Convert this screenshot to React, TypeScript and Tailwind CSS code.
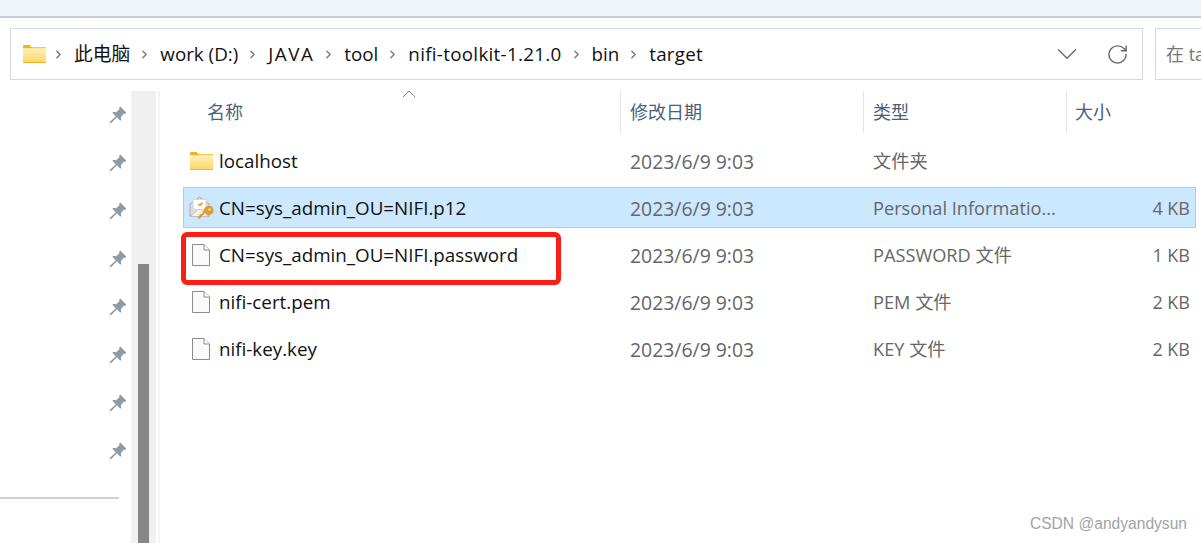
import { ChevronDown, ChevronRight, ChevronUp, RotateCw } from "lucide-react";

const FILES = [
  { name: "localhost", date: "2023/6/9 9:03", type: "文件夹", size: "", icon: "folder" },
  { name: "CN=sys_admin_OU=NIFI.p12", date: "2023/6/9 9:03", type: "Personal Informatio...", size: "4 KB", icon: "cert", selected: true },
  { name: "CN=sys_admin_OU=NIFI.password", date: "2023/6/9 9:03", type: "PASSWORD 文件", size: "1 KB", icon: "file", marked: true },
  { name: "nifi-cert.pem", date: "2023/6/9 9:03", type: "PEM 文件", size: "2 KB", icon: "file" },
  { name: "nifi-key.key", date: "2023/6/9 9:03", type: "KEY 文件", size: "2 KB", icon: "file" },
];

const CRUMBS = [
  { label: "此电脑", className: "" },
  { label: "work (D:)", className: "" },
  { label: "JAVA", className: "tracking-[1.5px]" },
  { label: "tool", className: "" },
  { label: "nifi-toolkit-1.21.0", className: "tracking-[0.3px]" },
  { label: "bin", className: "" },
  { label: "target", className: "tracking-[0.2px]" },
];

function FolderIcon() {
  return (
    <svg width="23" height="18" viewBox="0 0 23 18" className="shrink-0">
      <defs>
        <linearGradient id="folderFill" x1="0" y1="0" x2="0" y2="1">
          <stop offset="0" stopColor="#fff0bd" />
          <stop offset="1" stopColor="#fbd564" />
        </linearGradient>
      </defs>
      <path d="M0 1.2C0 .5.5 0 1.2 0h5.4l2 2.2H23v2H0z" fill="#f5b31a" />
      <path d="M0 3.2h23V18H0z" fill="url(#folderFill)" />
      <path d="M0 17h23v1H0z" fill="#eeb128" />
    </svg>
  );
}

function FileIcon() {
  return (
    <svg width="18" height="22" viewBox="0 0 18 22" className="shrink-0">
      <path d="M.5.5h11.5l5.500 5.500v15.500H.5z" fill="#fafafa" stroke="#8c8c8c" />
      <path d="M12 .5V6h5.500" fill="#fff" stroke="#8c8c8c" />
    </svg>
  );
}

function CertIcon() {
  return (
    <svg width="25" height="25" viewBox="0 0 25 25" className="shrink-0">
      <path d="M1 9l9.500-7 9.500 7v12.500H1z" fill="#dcdcdc" stroke="#a9a9a9" />
      <path d="M4 4.500h13V13l-6.500 4L4 13z" fill="#fff" stroke="#d6d6d6" />
      <path d="M8 10l5-3 1.500 1.500-3 3z" fill="#e8b54a" />
      <path d="M1.500 21.500l7.500-7h3l7.500 7z" fill="#f2f2f2" stroke="#c2c2c2" />
      <path d="M19 11a4.500 4.500 0 1 1-2.800 6.700L11.500 23 9 24l-.5-2 1.800-1 .2-1.600 1.800-.3 2.600-3A4.500 4.500 0 0 1 19 11z" fill="#df9d36" />
      <circle cx="20.500" cy="14.500" r="1.300" fill="#f7dc9c" />
    </svg>
  );
}

function PinIcon() {
  return (
    <svg width="18" height="18" viewBox="0 0 16 16">
      <path d="M10 .5L15.500 6 14 7l-1-.2-2.500 3.200.5 2-1 1-3-3-5.500 5.500-1-1L6 9 3 6l1-1 2 .5L9.200 3 9 1.500z" fill="#8f9ba3" />
    </svg>
  );
}

function RowIcon({ icon }: { icon: string }) {
  if (icon === "folder") return <FolderIcon />;
  if (icon === "cert") return <CertIcon />;
  return <FileIcon />;
}

export default function App() {
  return (
    <div className="w-[1201px] h-[543px] relative overflow-hidden bg-white flex flex-col font-['Open_Sans','Noto_Sans_CJK_SC',sans-serif] text-[18.8px] text-[#111]">
      <div className="h-[18px] shrink-0 bg-[#eff4f8] border-b-2 border-[#bfd0d8]" />

      <div className="h-[52px] mt-[10px] shrink-0 flex gap-3 pl-[10px]">
        <div className="w-[1133px] shrink-0 border border-[#d9d9d9] flex items-center pl-[12px] pr-[12px]">
          <FolderIcon />
          <div className="flex items-center ml-[6px]">
            {CRUMBS.map((c) => (
              <div key={c.label} className="flex items-center">
                <ChevronRight size={13} strokeWidth={2.5} className="text-[#777] mr-[9px]" />
                <span className={`mr-[8px] ${c.className}`}>{c.label}</span>
              </div>
            ))}
          </div>
          <ChevronDown size={34} strokeWidth={0.9} className="ml-auto text-[#666]" />
          <RotateCw size={23} strokeWidth={1.5} className="ml-[22px] mr-[1px] text-[#666]" />
        </div>
        <div className="flex-1 border border-r-0 border-[#d9d9d9] flex items-center pl-[10px] text-[#777] text-[18px] whitespace-nowrap">
          在 ta
        </div>
      </div>

      <div className="flex-1 flex mt-[11px] min-h-0">
        <div className="w-[131px] shrink-0 flex flex-col">
          <div className="flex flex-col items-end gap-[30px] pt-[15px] pr-[4px]">
            {[0, 1, 2, 3, 4, 5, 6, 7].map((i) => (
              <PinIcon key={i} />
            ))}
          </div>
          <div className="mt-[37px] w-[119px] h-[2px] bg-[#d0d0d0]" />
        </div>

        <div className="w-[25px] shrink-0 bg-[#f0f0f0] pt-[173px] flex justify-center">
          <div className="w-[11px] h-full bg-[#868686]" />
        </div>
        <div className="w-[2px] ml-[2px] shrink-0 bg-[#f3f3f3]" />

        <div className="flex-1 flex flex-col pl-[23px] pr-[5px]">
          <div className="h-[42px] shrink-0 relative flex items-center text-[#4c607a] text-[18px]">
            <div className="w-[438px] pl-[24px] h-full flex items-center border-r border-[#e3e3e3]">名称</div>
            <ChevronUp size={24} strokeWidth={0.9} className="absolute left-[214px] top-[-9px] text-[#777]" />
            <div className="w-[243px] pl-[9px] h-full flex items-center border-r border-[#e3e3e3]">修改日期</div>
            <div className="w-[203px] pl-[9px] h-full flex items-center border-r border-[#e3e3e3]">类型</div>
            <div className="pl-[8px]">大小</div>
          </div>

          <div className="flex flex-col gap-[6px] mt-[7px]">
            {FILES.map((f) => (
              <div
                key={f.name}
                className={`relative h-[41px] flex items-center border whitespace-nowrap ${
                  f.selected ? "bg-[#cce8ff] border-[#99d1ff]" : "border-transparent"
                }`}
              >
                <div className="w-[436px] flex items-center pl-[5px]">
                  <div className="w-[24px] flex justify-center">
                    <RowIcon icon={f.icon} />
                  </div>
                  <span className="ml-[6px] pt-[2px]">{f.name}</span>
                </div>
                <div className="w-[243px] pl-[10px] pt-[2px] text-[#666] text-[19.4px]">{f.date}</div>
                <div className="w-[203px] pl-[10px] pt-[2px] text-[#666] text-[18.2px]">{f.type}</div>
                <div className="flex-1 text-right pr-[5px] pt-[2px] text-[#666] text-[18px]">{f.size}</div>
                {f.marked && (
                  <div className="absolute left-[-3px] top-[-3px] w-[380px] h-[53px] border-[5px] border-[#fa1e14] rounded-[6px]" />
                )}
              </div>
            ))}
          </div>
        </div>
      </div>

      <div className="absolute right-[14px] bottom-[9px] font-['Liberation_Sans',sans-serif] text-[15.6px] leading-[20px] text-[#a3a3a3]">
        CSDN @andyandysun
      </div>
    </div>
  );
}
